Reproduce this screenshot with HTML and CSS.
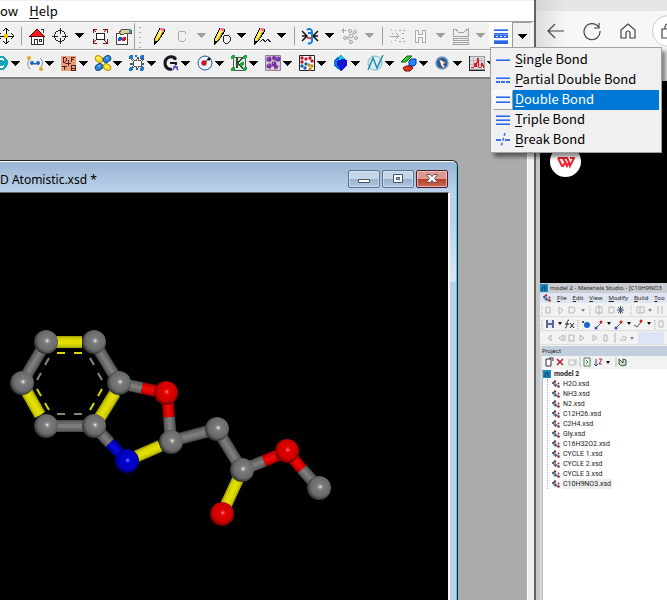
FILE: index.html
```html
<!DOCTYPE html>
<html lang="en">
<head>
<meta charset="utf-8">
<title>Materials Studio</title>
<link rel="stylesheet" href="styles.css">
</head>
<body>
<svg class="defs" aria-hidden="true">
  <defs>
    <symbol id="arrow" viewBox="0 0 9 5"><path d="M0 0h9v1h-1v1h-1v1h-1v1h-1v1h-1v-1h-1v-1h-1v-1h-1v-1h-1z" fill="currentColor"/></symbol>
    <symbol id="pencil" viewBox="0 0 12 18">
      <path d="M7 1h3l1 1v3L5 14l-4 3V13z" fill="#ffe000" stroke="#000"/>
      <path d="M7 3l3 2L5 13l-2-1z" fill="#fff36b"/><path d="M9.5 5.500L4.500 14" stroke="#b08a00"/>
      <path d="M7 1h3l1 1v3L7 3z" fill="#ff6f9f"/><path d="M1 13l3 2-3 3z" fill="#000"/>
    </symbol>
    <symbol id="bond" viewBox="0 0 14 14"><path d="M0 6h14v2H0z" fill="#2e66e8"/><path d="M0 6h14v1H0z" fill="#7ba3ff"/></symbol>
    <symbol id="doc" viewBox="0 0 8 8"><path d="M1 2l3 2 2 2M1 5l3-1" stroke="#889" fill="none"/><g fill="#8c2d3a"><circle cx="3" cy="1.500" r="1.200"/><circle cx="6.500" cy="6.500" r="1.300"/><circle cx="6.500" cy="3.500" r="1"/></g><g fill="#33558c"><circle cx="1.200" cy="3" r="1.200"/><circle cx="3.500" cy="5.500" r="1.200"/></g></symbol>
    <radialGradient id="ballGrey" cx=".55" cy=".45" r=".55"><stop offset="0" stop-color="#fff"/><stop offset=".1" stop-color="#aaa"/><stop offset=".24" stop-color="#7b7b7b"/><stop offset=".72" stop-color="#6a6a6a"/><stop offset="1" stop-color="#333"/></radialGradient>
    <radialGradient id="ballRed" cx=".53" cy=".45" r=".55"><stop offset="0" stop-color="#ff9c9c"/><stop offset=".12" stop-color="#ef2020"/><stop offset=".25" stop-color="#e00000"/><stop offset=".7" stop-color="#cf0000"/><stop offset="1" stop-color="#620000"/></radialGradient>
    <radialGradient id="ballBlue" cx=".53" cy=".47" r=".55"><stop offset="0" stop-color="#9c9cff"/><stop offset=".12" stop-color="#2222df"/><stop offset=".25" stop-color="#0000d4"/><stop offset=".7" stop-color="#0000bd"/><stop offset="1" stop-color="#000060"/></radialGradient>
    <path id="greyBonds" d="M46 342L22 383M94 342L119 383M46 426H94M119 383L142 388M171 441L169 417M171 441L217 429L242 470M242 470L264 461M318 487L302 469M94 426L110 443"/>
    <path id="redBonds" d="M142 388L166 393M169 417L167 393M264 461L287 451M302 469L287 451"/>
    <path id="blueBonds" d="M110 443L127 461"/>
    <path id="yellowBonds" d="M56 342H82M27 392L40 415M115 393L99 419M135 457L160 446M238 479L226 505"/>
  </defs>
</svg>
<div class="desktop">
  <main class="studio">
    <nav class="menubar"><a href="#">ow</a><a href="#"><u>H</u>elp</a></nav>

    <div class="toolbar sketch-bar">
      <button class="tool" aria-label="Move"><svg viewBox="0 0 22 22"><path d="M11 3v16M3 11h16M11 3L8 6M11 3l3 3M11 19l-3-3M11 19l3-3M3 11l3-3M3 11l3 3M19 11l-3-3M19 11l-3 3" stroke="#000" fill="none"/><circle cx="11" cy="11" r="2.500" fill="#f3c400"/></svg></button>
      <span class="divider"></span>
      <button class="tool" aria-label="Home"><svg viewBox="0 0 22 22"><path d="M5 11h12v8H5z" fill="#fff" stroke="#333"/><path d="M4 11L11 4l7 7z" fill="#ee1c1c" stroke="#600"/><path d="M15 4h2v4" stroke="#333" fill="none"/><path d="M8 19v-5h3v5M13 14h2v2h-2z" fill="none" stroke="#333"/></svg></button>
      <button class="tool" aria-label="Center"><svg viewBox="0 0 22 22"><circle cx="11" cy="11" r="5.500" fill="none" stroke="#222"/><path d="M11 3v6M11 13v6M3 11h6M13 11h6" stroke="#222"/></svg></button>
      <button class="drop" aria-label="Center options"><svg><use href="#arrow"/></svg></button>
      <button class="tool" aria-label="Fit"><svg viewBox="0 0 22 22"><path d="M7 8h8v6H7z" fill="#fff" stroke="#222"/><path d="M4 8V4h4M4 4l3 3M18 8V4h-4M18 4l-3 3M4 14v4h4M4 18l3-3M18 14v4h-4M18 18l-3-3" stroke="#7d1010" fill="none"/></svg></button>
      <button class="tool" aria-label="Display style"><svg viewBox="0 0 22 22"><path d="M4 8h11v11H4z" fill="#fff" stroke="#444"/><path d="M7 8l3-4h6l3 1v3h-5l-4 2z" fill="#d8d09c" stroke="#55513b"/><path d="M17 4h2v4h-2z" fill="#3897b4"/><circle cx="8" cy="14" r="2" fill="#1952d8"/><circle cx="12" cy="14" r="2" fill="#e01818"/></svg></button>
      <span class="grip"></span>
      <button class="tool" aria-label="Sketch atom"><svg viewBox="0 0 22 22"><use href="#pencil" x="5" y="2" width="12" height="18"/></svg></button>
      <button class="tool off" aria-label="Element C"><svg viewBox="0 0 22 22"><path d="M14 9V7l-1-1h-4L7 8v6l2 2h4l1-1v-1" fill="none" stroke="#aaa"/></svg></button>
      <button class="drop off" aria-label="Element options"><svg><use href="#arrow"/></svg></button>
      <button class="tool" aria-label="Sketch ring"><svg viewBox="0 0 22 22"><use href="#pencil" x="2" y="2" width="12" height="18"/><path d="M12 12l2-2h3l2 2v4l-2 2h-3l-2-2z" fill="#eee" stroke="#222"/></svg></button>
      <button class="drop" aria-label="Ring options"><svg><use href="#arrow"/></svg></button>
      <button class="tool" aria-label="Sketch fragment"><svg viewBox="0 0 22 22"><use href="#pencil" x="2" y="2" width="12" height="18"/><path d="M9 17l3-3 2 3 3-3 2 3 1-1" fill="none" stroke="#222"/></svg></button>
      <button class="drop" aria-label="Fragment options"><svg><use href="#arrow"/></svg></button>
      <span class="divider"></span>
      <button class="tool smooth" aria-label="Clean"><svg viewBox="0 0 22 22"><path d="M3 6l5 5-5 5M19 6l-5 5 5 5M3 11h4M15 11h4" stroke="#111" stroke-width="1.500" fill="none"/><path d="M8 13h6" stroke="#e01818" stroke-width="1.500"/><path d="M8 5c2-2 5-1 5 2v9c0 2-2 3-4 2M9 8h5" stroke="#147ce5" stroke-width="2" fill="none"/></svg></button>
      <button class="drop" aria-label="Clean options"><svg><use href="#arrow"/></svg></button>
      <button class="tool off smooth" aria-label="Add hydrogen"><svg viewBox="0 0 22 22"><path d="M2 5.500h5M4.500 3v5M8 13l4-3 4-2M8 13l5 4" stroke="#a3a3a3" fill="none"/><g fill="#eee" stroke="#a3a3a3"><circle cx="11" cy="6" r="1.500"/><circle cx="16" cy="7" r="1.500"/><circle cx="12" cy="11" r="2"/><circle cx="6" cy="13" r="1.500"/><circle cx="12" cy="17" r="1.500"/><circle cx="17" cy="13" r="1.500"/></g></svg></button>
      <button class="drop off" aria-label="Hydrogen options"><svg><use href="#arrow"/></svg></button>
      <span class="divider"></span>
      <button class="tool off" aria-label="Align"><svg viewBox="0 0 22 22"><path d="M4 4v1M8 5v1M5 8v1M4 16v1M8 15v1M12 5h2M16 5h2M12 16h2M16 16h2M15 8h2M15 13h2" stroke="#a3a3a3"/><path d="M3 11h9M9 8l3 3-3 3" stroke="#a3a3a3" fill="none"/></svg></button>
      <button class="tool off" aria-label="Hydrogen"><svg viewBox="0 0 22 22"><path d="M5 5h3v4h4V5h3v12h-3v-5H8v5H5z" fill="#f7f7f7" stroke="#aaa"/></svg></button>
      <button class="drop off" aria-label="Symmetry options"><svg><use href="#arrow"/></svg></button>
      <button class="tool off" aria-label="Layers"><svg viewBox="0 0 22 22"><path d="M3 4v7h15V4l-4 3H8L6 4zM3 13h15v2H3zM3 17h15v2H3z" fill="#eee" stroke="#a3a3a3"/></svg></button>
      <button class="drop off" aria-label="Layer options"><svg><use href="#arrow"/></svg></button>
      <div class="bond-picker">
        <button class="tool raised" aria-label="Bond type"><svg viewBox="0 0 22 22"><path d="M4 4h14v2H4zM4 8h14v5H4zM4 15h14v4H4z" fill="#2e66e8"/><path d="M4 4h14v1H4zM4 9h14v1H4zM4 15h14v1H4z" fill="#6799ff"/><path d="M6 11h2v1H6zM10 11h2v1h-2zM14 11h2v1h-2z" fill="#e8eeff"/></svg></button>
        <button class="drop pressed" aria-label="Choose bond type"><svg><use href="#arrow"/></svg></button>
        <div class="bond-menu" role="menu">
          <button role="menuitem"><span class="mark"><svg viewBox="0 0 14 14"><use href="#bond"/></svg></span><span class="name"><u>S</u>ingle Bond</span></button>
          <button role="menuitem"><span class="mark"><svg viewBox="0 0 14 14"><use href="#bond" y="-2"/><path d="M0 9h4M5 9h4M10 9h4" stroke="#3b70ea" stroke-width="2"/></svg></span><span class="name"><u>P</u>artial Double Bond</span></button>
          <button role="menuitem" class="current"><span class="mark"><svg viewBox="0 0 14 14"><use href="#bond" y="-3"/><use href="#bond" y="2"/></svg></span><span class="name"><u>D</u>ouble Bond</span></button>
          <button role="menuitem"><span class="mark"><svg viewBox="0 0 14 14"><use href="#bond" y="-4"/><use href="#bond"/><use href="#bond" y="4"/></svg></span><span class="name"><u>T</u>riple Bond</span></button>
          <button role="menuitem"><span class="mark"><svg viewBox="0 0 14 14"><path d="M0 7h5M9 7h5" stroke="#3b70ea" stroke-width="2"/><path d="M9 0L5 14" stroke="#3b70ea" stroke-width="1.500" stroke-dasharray="3 2"/></svg></span><span class="name"><u>B</u>reak Bond</span></button>
        </div>
      </div>
    </div>

    <div class="toolbar module-bar">
      <button class="module" aria-label="CASTEP"><svg viewBox="0 0 34 22"><circle cx="10" cy="11" r="7" fill="#16a5bd"/><path d="M13 8a4 4 0 1 0 0 6" fill="none" stroke="#fff" stroke-width="2"/><use href="#arrow" x="20" y="9" width="9" height="5"/></svg></button>
      <button class="module smooth" aria-label="Conformers"><svg viewBox="0 0 34 22"><path d="M5 7C2 10 2 14 5 17M15 6c3 2 3 7 1 9" stroke="#888" fill="none"/><path d="M6 11l4 1 4-1" stroke="#222" fill="none"/><circle cx="4" cy="6" r="2" fill="#d9aa20"/><circle cx="16" cy="17" r="2" fill="#d9aa20"/><circle cx="7" cy="11" r="2" fill="#1268d5"/><circle cx="13" cy="11" r="2" fill="#1268d5"/><use href="#arrow" x="20" y="9" width="9" height="5"/></svg></button>
      <button class="module" aria-label="DFTB+"><svg viewBox="0 0 34 22"><path d="M2 4h15v15H2z" fill="#eaa27c"/><path d="M4 5v5h2l1-1V6L6 5zM12 10V5h4M12 7h3M3 14h5M5 14v4M12 13v5h4v-5zM12 16h4M9 8v6M6 11h6" stroke="#54211e" fill="none"/><use href="#arrow" x="20" y="9" width="9" height="5"/></svg></button>
      <button class="module smooth" aria-label="DMol3"><svg viewBox="0 0 34 22"><g><ellipse cx="6" cy="7" rx="4" ry="3" fill="#ffdf28" stroke="#b68e00" transform="rotate(35 6 7)"/><ellipse cx="14" cy="7" rx="4" ry="3" fill="#228be4" stroke="#12457c" transform="rotate(-35 14 7)"/><ellipse cx="6" cy="15" rx="4" ry="3" fill="#228be4" stroke="#12457c" transform="rotate(-35 6 15)"/><ellipse cx="14" cy="15" rx="4" ry="3" fill="#ffdf28" stroke="#b68e00" transform="rotate(35 14 15)"/></g><path d="M4 6h3M13 15h3" stroke="#fff7b0"/><path d="M13 6h2M5 14h2" stroke="#a6dcff"/><use href="#arrow" x="20" y="9" width="9" height="5"/></svg></button>
      <button class="module" aria-label="Forcite"><svg viewBox="0 0 34 22"><path d="M4 6l5 3 2-4 1 4 5-3-3 5 3 1-3 1 3 4-5-3-2 4-1-4-5 3 3-4-4-1 4-1z" fill="#fff" stroke="#555"/><g fill="#1a79d6"><circle cx="4" cy="5" r="2"/><circle cx="9" cy="4" r="1.500"/><circle cx="15" cy="5" r="2"/><circle cx="4" cy="17" r="2"/><circle cx="15" cy="17" r="2"/></g><use href="#arrow" x="20" y="9" width="9" height="5"/></svg></button>
      <button class="module smooth" aria-label="GULP"><svg viewBox="0 0 34 22"><path d="M14 8V6c-5-3-10 0-10 5s4 7 7 6" fill="none" stroke="#16161d" stroke-width="3"/><path d="M9 11h6v2" fill="none" stroke="#16161d" stroke-width="2"/><path d="M12 18l2-4 3 4M12 15h5" fill="none" stroke="#5250c5" stroke-width="1.500"/><use href="#arrow" x="20" y="9" width="9" height="5"/></svg></button>
      <button class="module smooth" aria-label="Kinetix"><svg viewBox="0 0 34 22"><circle cx="10" cy="11" r="7" fill="#eef4ff" stroke="#1c50b2"/><path d="M10 11l3-4" stroke="#222"/><circle cx="9" cy="11" r="2.700" fill="#c71620"/><circle cx="14" cy="7" r="1.500" fill="#111"/><use href="#arrow" x="20" y="9" width="9" height="5"/></svg></button>
      <button class="module" aria-label="Mesocite"><svg viewBox="0 0 34 22"><path d="M4 5h12v13H4z" fill="#e2eee4" stroke="#555"/><path d="M8 6v10M14 6l-6 5 7 6" stroke="#2b4a32" stroke-width="1.500" fill="none"/><g fill="#20a838"><circle cx="4" cy="5" r="2"/><circle cx="16" cy="5" r="2"/><circle cx="4" cy="17" r="2"/><circle cx="16" cy="17" r="2"/><circle cx="13" cy="12" r="2"/></g><use href="#arrow" x="20" y="9" width="9" height="5"/></svg></button>
      <button class="module smooth" aria-label="Mesodyn"><svg viewBox="0 0 34 22"><path d="M2.500 3.500h15v15h-15z" fill="#dcc9e2" stroke="#888"/><path d="M7 4v14M12 4v14M3 9h14M3 14h14" stroke="#999"/><g fill="#7c2fa2"><circle cx="6" cy="7" r="2.500"/><circle cx="11" cy="6" r="2"/><circle cx="15" cy="7" r="2.500"/><circle cx="6" cy="14" r="2.500"/><circle cx="11" cy="12" r="2.500"/><circle cx="13" cy="15" r="2"/></g><path d="M5 6h1M14 6h1M10 11h1M5 13h1" stroke="#e0b8ff"/><use href="#arrow" x="20" y="9" width="9" height="5"/></svg></button>
      <button class="module smooth" aria-label="Sorption"><svg viewBox="0 0 34 22"><path d="M2.500 3.500h15v15h-15z" fill="#fff" stroke="#222"/><g fill="#c3142f"><circle cx="5" cy="6" r="1.700"/><circle cx="9" cy="7" r="1.700"/><circle cx="13" cy="6" r="1.700"/><circle cx="15" cy="9" r="1.700"/><circle cx="5" cy="10" r="1.700"/></g><g fill="#1b63ad"><circle cx="5" cy="14" r="1.700"/><circle cx="8" cy="16" r="1.700"/><circle cx="9" cy="12" r="1.700"/></g><g fill="#b89018"><circle cx="12" cy="13" r="1.700"/><circle cx="15" cy="14" r="1.700"/><circle cx="13" cy="17" r="1.700"/></g><use href="#arrow" x="20" y="9" width="9" height="5"/></svg></button>
      <button class="module" aria-label="ONETEP"><svg viewBox="0 0 34 22"><path d="M10 3l-7 5v6l7 5z" fill="#087ee0"/><path d="M10 3l6 5v6l-6 5-4-6V8z" fill="#1713db"/><path d="M10 3l6 5-5-1-5 2z" fill="#20c7e1"/><path d="M7 11h7" stroke="#112a80" stroke-dasharray="2 1"/><use href="#arrow" x="20" y="9" width="9" height="5"/></svg></button>
      <button class="module smooth" aria-label="NMR"><svg viewBox="0 0 34 22"><circle cx="10" cy="11" r="7" fill="#daf0f6" stroke="#6fb8ca"/><path d="M3 18L8 6l4 10 6-13" fill="none" stroke="#2b8ba7" stroke-width="1.500"/><use href="#arrow" x="20" y="9" width="9" height="5"/></svg></button>
      <button class="module smooth" aria-label="Polymorph"><svg viewBox="0 0 34 22"><path d="M2 10l6-6h5l-6 6z" fill="#35c728" stroke="#145a11"/><path d="M10 9l2-2h5v5l-2 2h-5z" fill="#2488ff" stroke="#082fa0"/><path d="M4 16l3-2h5l2 2-3 3H6z" fill="#e03420" stroke="#711108"/><use href="#arrow" x="20" y="9" width="9" height="5"/></svg></button>
      <button class="module smooth" aria-label="QMERA"><svg viewBox="0 0 34 22"><circle cx="9" cy="11" r="6" fill="#245c91" stroke="#6e9fc5" stroke-width="1.500"/><path d="M6 7l7 4-3 1 2 3-2 1-2-3z" fill="#fff" stroke="#a52828" stroke-width=".5"/><use href="#arrow" x="20" y="9" width="9" height="5"/></svg></button>
      <button class="module" aria-label="Reflex"><svg viewBox="0 0 34 22"><path d="M2.500 4h15v13.500h-15z" fill="#ddd" stroke="#999"/><path d="M6 4v13M10 4v13M14 4v13M3 8h14M3 12h14" stroke="#bbb"/><path d="M2.500 4v14H18" stroke="#222" fill="none"/><path d="M4 16l3-1 1-4 1 4 2-9 1 9 2 0 1-4 2 5" stroke="#e11b1b" fill="none"/><use href="#arrow" x="20" y="9" width="9" height="5"/></svg></button>
    </div>

    <section class="workspace">
      <article class="viewer">
        <header class="caption">
          <h1>D Atomistic.xsd *</h1>
          <button class="frame-button" aria-label="Minimize"><svg viewBox="0 0 14 12"><path d="M1.500 6.500h11v3h-11z" fill="#fff" stroke="#4b5366"/></svg></button>
          <button class="frame-button" aria-label="Restore"><svg viewBox="0 0 14 12"><path d="M2.500 1.500h9v8h-9z" fill="#fff" stroke="#4b5366"/><path d="M5.500 4.500h3v2h-3z" fill="#a8bad0" stroke="#4b5366"/></svg></button>
          <button class="frame-button close" aria-label="Close"><svg viewBox="0 0 14 12"><path d="M2 1.500h3l2 2 2-2h3v1L9.500 5.500 12 8.500v1H9l-2-2-2 2H2v-1l2.500-3L2 2.500z" fill="#fff" stroke="#55455a"/></svg></button>
        </header>
        <div class="scene">
          <svg class="molecule" viewBox="0 193 448 408" role="img" aria-label="Molecule model">
            <g fill="none">
              <use href="#greyBonds" stroke="#4c4c4c" stroke-width="12"/><use href="#greyBonds" stroke="#686868" stroke-width="9"/><use href="#greyBonds" stroke="#7c7c7c" stroke-width="4"/>
              <use href="#redBonds" stroke="#990000" stroke-width="12"/><use href="#redBonds" stroke="#d20000" stroke-width="9"/><use href="#redBonds" stroke="#ed0808" stroke-width="4"/>
              <use href="#blueBonds" stroke="#000087" stroke-width="12"/><use href="#blueBonds" stroke="#0000bd" stroke-width="9"/><use href="#blueBonds" stroke="#0808df" stroke-width="4"/>
              <use href="#yellowBonds" stroke="#a7a600" stroke-width="12"/><use href="#yellowBonds" stroke="#d3d200" stroke-width="9"/><use href="#yellowBonds" stroke="#e0df00" stroke-width="4"/>
              <path d="M57 353h8M74 353h8M37 389l4 7M45 403l4 7M102 389l-4 7M94 403l-4 7" stroke="#d8d800" stroke-width="2"/>
              <path d="M57 414h8M74 414h8M49 358l-4 7M41 373l-4 7M90 358l4 7M98 373l4 7" stroke="#858585" stroke-width="2"/>
            </g>
            <g fill="url(#ballGrey)"><circle cx="46" cy="342" r="12"/><circle cx="94" cy="342" r="12"/><circle cx="119" cy="383" r="12"/><circle cx="94" cy="426" r="12"/><circle cx="46" cy="426" r="12"/><circle cx="22" cy="383" r="12"/><circle cx="171" cy="442" r="12"/><circle cx="217" cy="429" r="12"/><circle cx="242" cy="470" r="12"/><circle cx="319" cy="488" r="12"/></g>
            <g fill="url(#ballRed)"><circle cx="166" cy="393" r="12"/><circle cx="287" cy="451" r="12"/><circle cx="222" cy="514" r="12"/></g>
            <circle cx="127" cy="461" r="12" fill="url(#ballBlue)"/>
          </svg>
        </div>
      </article>
    </section>
  </main>

  <aside class="browser">
    <div class="tabs"></div>
    <div class="navigation">
      <button aria-label="Back"><svg viewBox="0 0 20 20"><path d="M18 10H2M9 3l-7 7 7 7"/></svg></button>
      <button aria-label="Reload"><svg viewBox="0 0 20 20"><path d="M16.500 6a8 8 0 1 0 1.500 4M17 2v5h-5"/></svg></button>
      <button aria-label="Home page"><svg viewBox="0 0 20 20"><path d="M3 9l7-6 7 6v8h-5v-5a2 2 0 0 0-4 0v5H3z"/></svg></button>
      <button class="address" aria-label="Site information"><svg viewBox="0 0 20 20"><path d="M4 8h12v9H4zM7 8V6a3 3 0 0 1 6 0v2"/></svg></button>
    </div>
    <div class="page">
      <div class="video"><span class="badge"><svg viewBox="0 0 18 14"><path d="M1 3h9l2 4-2 4-4-8M1 3l4 8h1l3-5M12 7l1 4 4-8h-4" fill="none" stroke="#f5222d" stroke-width="2"/></svg></span></div>
      <div class="mini">
        <div class="mini-title"><svg viewBox="0 0 8 8"><path d="M0 0h8v8H0z" fill="#1789c5"/><path d="M2 7V4l3-2v5" stroke="#12364e" fill="none"/></svg><span>model 2 - Materials Studio - [C10H9NO3</span></div>
        <nav class="mini-menu"><svg viewBox="0 0 8 8"><use href="#doc"/></svg><a href="#"><u>F</u>ile</a><a href="#"><u>E</u>dit</a><a href="#"><u>V</u>iew</a><a href="#"><u>M</u>odify</a><a href="#"><u>B</u>uild</a><a href="#"><u>T</u>oo</a></nav>
        <div class="mini-tools"><svg viewBox="0 0 124 14"><g fill="none" stroke="#b8b8b8"><path d="M2 3v9M50 3v9M91 3v9" stroke-dasharray="1 1"/><path d="M6 4h4v6H6zM19 4l4 3-4 4zM29 4v6h3a3 3 0 0 0 0-6zM56 4h6v6h-6zM59 2v10M69 4h5v6h-5zM97 10V4h7v6zM100 4v6M118 3v8M122 3v8"/></g><path d="M78 4l5 6M83 4l-5 6M77 7h7M80.500 3v8" stroke="#384c6a"/><path d="M41 6h4l-2 3zM108 6h4l-2 3z" fill="#888"/></svg></div>
        <div class="mini-tools"><svg viewBox="0 0 124 14"><path d="M2 3v9M38 3v9M115 3v9" stroke="#aaa" stroke-dasharray="1 1"/><path d="M6 3h8v8H6z" fill="#5a6698"/><path d="M8 3h4v3H8zM8 8h4v3H8z" fill="#e2e4f1"/><path d="M18 5h4l-2 3zM67 5h4l-2 3zM87 5h4l-2 3zM107 5h4l-2 3z" fill="#111"/><path d="M29 3c-3 0-1 8-4 8M25 7h4M30 6l4 5M34 6l-4 5" stroke="#222" fill="none"/><circle cx="47" cy="8" r="3" fill="#1267cc"/><circle cx="43" cy="5" r="1" fill="#222"/><path d="M56 11l6-6M76 11l6-6M94 8l3 2 4-5" stroke="#555" fill="none"/><g fill="#d11d23"><circle cx="61" cy="5" r="1.500"/><circle cx="81" cy="5" r="1.500"/><circle cx="101" cy="4" r="1.500"/></g><g fill="#2353ae"><circle cx="56" cy="11" r="1.500"/><circle cx="76" cy="11" r="1.500"/></g><path d="M119 4h4v6h-4z" fill="none" stroke="#bbb"/></svg></div>
        <div class="mini-tools playback"><svg viewBox="0 0 124 14"><g fill="none" stroke="#b4b4b4"><path d="M11 4L8 7l3 3zM23 4l-4 3 4 3zM25 4v6M29 4h5v6h-5zM40 4v6l4-3zM53 4v6l4-3zM64 4v6h3V4zM80 9h6V6h-4"/><path d="M75 2v10"/></g><path d="M90 6h4l-2 3z" fill="#888"/><path d="M98 1h26v12H98z" fill="#dde4f5"/></svg></div>
        <section class="project">
          <h2>Project</h2>
          <div class="project-tools"><svg viewBox="0 0 124 12"><path d="M4 3h5v7H4zM7 2h4v3" fill="#fff" stroke="#333"/><path d="M15 3l6 6M21 3l-6 6" stroke="#b5202a" stroke-width="1.500"/><path d="M27 4h6v5h-6zM34 3v5" stroke="#bbb" fill="none"/><path d="M38 1v10M74 1v10" stroke="#bbb"/><path d="M42 2h6v8h-6z" fill="#edf7ed" stroke="#567b56"/><path d="M44 4l2 2-2 2" stroke="#149b2b" fill="none"/><path d="M54 3v7M52 8l2 2 2-2" stroke="#214b9c" fill="none"/><path d="M57 3h3l-3 5h3" stroke="#b02a36" fill="none"/><path d="M64 5h4l-2 3z" fill="#111"/><path d="M77 3v5l3 2 4-1V4l-3-1v4z" fill="#cde1cf" stroke="#31553d"/></svg></div>
          <div class="tree">
            <p class="root"><svg viewBox="0 0 8 8"><path d="M0 0h8v8H0z" fill="#1789c5"/><path d="M2 7V4l3-2v5" stroke="#12364e" fill="none"/></svg>model 2</p>
            <ul>
              <li><svg viewBox="0 0 8 8"><use href="#doc"/></svg><span>H2O.xsd</span></li>
              <li><svg viewBox="0 0 8 8"><use href="#doc"/></svg><span>NH3.xsd</span></li>
              <li><svg viewBox="0 0 8 8"><use href="#doc"/></svg><span>N2.xsd</span></li>
              <li><svg viewBox="0 0 8 8"><use href="#doc"/></svg><span>C12H26.xsd</span></li>
              <li><svg viewBox="0 0 8 8"><use href="#doc"/></svg><span>C2H4.xsd</span></li>
              <li><svg viewBox="0 0 8 8"><use href="#doc"/></svg><span>Gly.xsd</span></li>
              <li><svg viewBox="0 0 8 8"><use href="#doc"/></svg><span>C16H32O2.xsd</span></li>
              <li><svg viewBox="0 0 8 8"><use href="#doc"/></svg><span>CYCLE 1.xsd</span></li>
              <li><svg viewBox="0 0 8 8"><use href="#doc"/></svg><span>CYCLE 2.xsd</span></li>
              <li><svg viewBox="0 0 8 8"><use href="#doc"/></svg><span>CYCLE 3.xsd</span></li>
              <li class="open"><svg viewBox="0 0 8 8"><use href="#doc"/></svg><span>C10H9NO3.xsd</span></li>
            </ul>
          </div>
        </section>
      </div>
    </div>
  </aside>
</div>
</body>
</html>
```
FILE: styles.css
```css
* { box-sizing: border-box; }
body { margin: 0; font: 13px/20px "Noto Sans CJK SC", "Noto Sans", sans-serif; color: #000; overflow: hidden; }
button { margin: 0; padding: 0; border: 0; background: none; font: inherit; color: inherit; }
a { color: inherit; text-decoration: none; }
svg { display: block; flex: none; }
u { text-underline-offset: 2px; }
.defs { position: absolute; width: 0; height: 0; }

.desktop { display: grid; grid-template-columns: minmax(0, 536fr) minmax(0, 131fr); min-height: 100vh; }

/* Modelling application */
.studio { display: flex; flex-direction: column; min-width: 0; background: #f0f0f0; border-right: 2px solid #636363; z-index: 1; }
.menubar { display: flex; gap: 11px; height: 21px; background: #fff; border-top: 1px solid #f0f0f0; }
.toolbar { display: flex; align-items: center; height: 28px; border-top: 1px solid #a0a0a0; box-shadow: inset 0 1px #fff; }
.sketch-bar { margin-left: -6px; }
.module-bar { height: 30px; margin-left: -9px; padding-bottom: 1px; border-bottom: 2px solid #808080; }
.tool, .drop { display: grid; flex: none; place-items: center; height: 27px; }
.tool { width: 23px; }
.tool svg { width: 22px; height: 22px; shape-rendering: crispEdges; }
.drop { width: 17px; }
.drop svg { width: 9px; height: 5px; }
.drop.off { color: #a0a0a0; }
.divider { flex: none; width: 8px; height: 18px; background: linear-gradient(#a0a0a0, #a0a0a0) center / 1px 100% no-repeat; }
.grip { flex: none; width: 13px; height: 26px; border-left: 1px solid #a0a0a0; background: radial-gradient(circle, #aaa 1px, transparent 1px) 3px 2px / 4px 5px repeat-y; }
.module { flex: none; width: 34px; height: 22px; }
.module svg { width: 34px; height: 22px; shape-rendering: crispEdges; }
.smooth svg { shape-rendering: auto; }
.bond-picker { display: flex; position: relative; }
.raised { background: #fff; }
.pressed { width: 20px; border: 1px solid #9a9a9a; border-right-color: #fff; border-bottom: 0; }
.bond-menu { position: absolute; top: 25px; left: 1px; width: 172px; padding: 2px; background: #f0f0f0; border: 1px solid #a0a0a0; box-shadow: 4px 4px 4px #0007; }
.bond-menu button { display: grid; grid-template-columns: 20px 1fr; width: 100%; height: 20px; line-height: 18px; text-align: left; }
.mark { display: grid; place-items: center; border: 1px solid transparent; }
.mark svg { width: 14px; height: 14px; }
.name { padding-left: 2px; white-space: nowrap; }
.current .mark { border-color: #fff #a0a0a0 #a0a0a0 #fff; background: #f7f7f7; }
.current .name { background: #0078d7; color: #fff; }

.workspace { display: flex; flex: 1; padding: 81px 70px 0 0; background: #ababab; border-right: 6px solid #f0f0f0; box-shadow: inset -1px 0 #fff; }
.viewer { display: flex; flex: 1; flex-direction: column; min-width: 0; border-top: 1px solid #222; border-right: 1px solid #222; border-radius: 0 6px 0 0; background: linear-gradient(#99b4d1, #b9d1ea 30px, #b9d1ea 60px, #dce8f5 120px, #b9d1ea 121px); box-shadow: inset 0 1px #fff, inset -1px 0 #30cdf0; }
.caption { display: flex; align-items: center; gap: 2px; height: 31px; padding: 4px 9px 0 0; }
.caption h1 { flex: 1; margin: 0; padding-top: 2px; font: 12px/20px "Noto Sans", "Open Sans", sans-serif; white-space: nowrap; }
.frame-button { display: grid; place-items: center; width: 32px; height: 18px; border: 1px solid #60738f; border-radius: 2px; background: linear-gradient(#c4d6ea 50%, #97afcc 50%, #b5cae1); box-shadow: inset 0 0 0 1px #d9e6f3aa; }
.frame-button svg { width: 14px; height: 12px; }
.close { border-color: #531b27; background: linear-gradient(#e0988c 50%, #b93b27 50%, #cf6a50); }
.scene { flex: 1; margin-right: 7px; border-top: 1px solid #696969; border-right: 2px solid #f5f5f5; background: #000; }
.molecule { width: 448px; height: 408px; }

/* Browser behind */
.browser { display: flex; flex-direction: column; min-width: 0; overflow: hidden; background: linear-gradient(90deg, #ddd, #f7f7f7 30px); }
.tabs { flex: none; height: 11px; background: linear-gradient(90deg, #d5d5d5, #e6e6e6 30px); }
.navigation { display: flex; gap: 16px; flex: none; height: 70px; padding: 10px 0 0 10px; }
.navigation button { flex: none; width: 20px; height: 20px; }
.navigation svg { width: 20px; height: 20px; fill: none; stroke: #444; stroke-width: 1.2; }
.navigation .address { display: grid; place-items: center; width: 32px; height: 32px; margin: -6px 0 0 -2px; border: 1px solid #ccc; border-radius: 16px; background: #fff; }
.page { flex: 1; border-left: 4px solid #c6c6c6; background: #fff; }
.video { height: 202px; padding: 65px 0 0 10px; background: #000; }
.badge { display: grid; place-items: center; width: 31px; height: 31px; border-radius: 50%; background: #fff; }
.badge svg { width: 18px; height: 14px; }
.mini { font-family: Roboto, "Liberation Sans", sans-serif; font-size: 7px; line-height: 10px; color: #222; white-space: nowrap; background: #f2f2f2; }
.mini-title, .mini-menu { display: flex; align-items: center; height: 10px; font-family: "Noto Sans", sans-serif; font-size: 6px; }
.mini-title { gap: 2px; background: #c9cdd2; }
.mini-menu { gap: 6px; padding-left: 3px; background: #e0e5f2; }
.mini u { text-underline-offset: 1px; }
.mini-title svg, .mini-menu svg { width: 8px; height: 8px; }
.mini-tools { height: 14px; border-bottom: 1px solid #ddd; overflow: hidden; }
.mini-tools svg { width: 124px; height: 14px; }
.project { margin-top: 1px; border-left: 2px solid #d4d9df; }
.project h2 { margin: 0; height: 10px; font-size: 6px; line-height: 10px; font-weight: 400; background: #c3cfdd; }
.project-tools { height: 13px; overflow: hidden; }
.project-tools svg { width: 124px; height: 12px; }
.tree { min-height: 231px; background: #fff; border-left: 1px solid #bbb; }
.tree p, .tree li { display: flex; align-items: center; height: 10px; margin: 0; }
.root { gap: 3px; font-weight: 700; }
.tree svg { width: 8px; height: 8px; }
.tree ul { margin: 0 0 0 4px; padding: 0; list-style: none; border-left: 1px dotted #aaa; }
.tree li { gap: 2px; padding-left: 4px; }
.tree li span { padding: 0 1px; }
.open span { background: #eee; }
```
